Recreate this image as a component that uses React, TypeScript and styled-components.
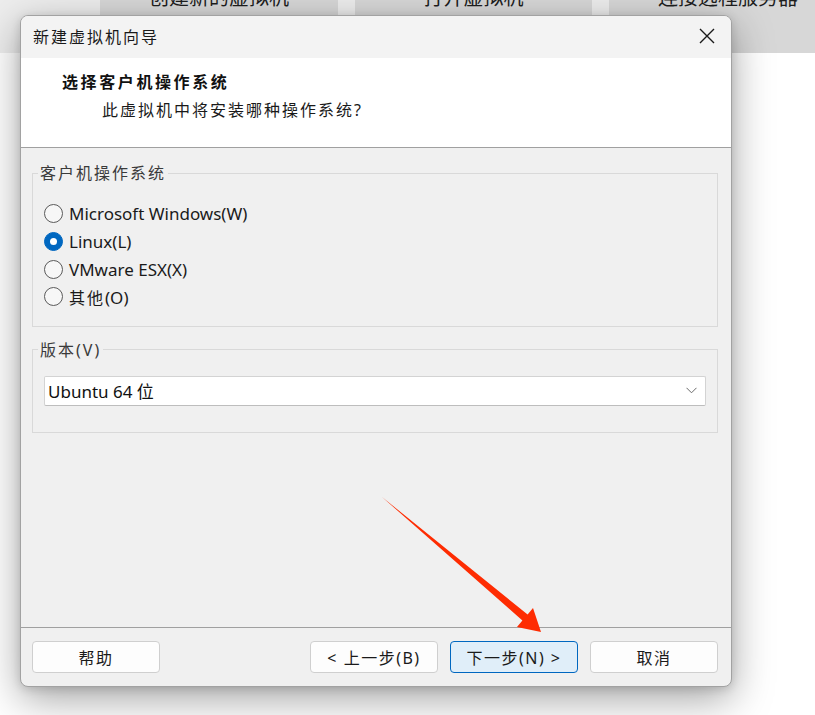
import React from 'react';
import styled, { createGlobalStyle } from 'styled-components';

const FONT = `"Noto Sans", "Noto Sans CJK SC", sans-serif`;

const GlobalStyle = createGlobalStyle`
  html, body {
    margin: 0;
    padding: 0;
    background: #ffffff;
  }
  body {
    font-family: ${FONT};
    color: #1a1a1a;
  }
`;

const Desktop = styled.div`
  position: relative;
  width: 815px;
  height: 715px;
  overflow: hidden;
  background: #ffffff;
`;

const Toolbar = styled.div`
  display: flex;
  gap: 17px;
  height: 83px;
  margin-top: -30px;
  padding-left: 100px;
  background: #ededed;
`;

const ToolButton = styled.div<{ $w: number }>`
  flex: 0 0 ${p => p.$w}px;
  background: #d7d7d7;
  color: #1e1e1e;
  font-size: 20px;
  line-height: 24px;
  text-align: center;
  padding-top: 16px;
  box-sizing: border-box;
`;

const Window = styled.div`
  position: absolute;
  left: 20px;
  top: 15px;
  width: 712px;
  height: 672px;
  box-sizing: border-box;
  display: flex;
  flex-direction: column;
  border: 1px solid #a2a2a2;
  border-radius: 8px;
  overflow: hidden;
  background: #f0f0f0;
  box-shadow: 0 12px 40px rgba(0, 0, 0, 0.36), 0 2px 10px rgba(0, 0, 0, 0.14);
`;

const TitleBar = styled.div`
  flex: 0 0 42px;
  display: flex;
  align-items: center;
  justify-content: space-between;
  padding: 0 16px 3px 12px;
  box-sizing: border-box;
  background: #f3f3f3;
  font-size: 16px;
  letter-spacing: 2px;
  color: #1a1a1a;
`;

const CloseIcon = () => (
  <svg width="16" height="16" viewBox="0 0 16 16">
    <path d="M1 1 L15 15 M15 1 L1 15" stroke="#1a1a1a" strokeWidth="1.4" fill="none" />
  </svg>
);

const Header = styled.div`
  flex: 0 0 90px;
  background: #ffffff;
  border-bottom: 1px solid #a0a0a0;
  padding: 12px 0 0 41px;
  box-sizing: border-box;
`;

const HeaderTitle = styled.div`
  font-size: 16px;
  font-weight: 700;
  letter-spacing: 2.6px;
  line-height: 24px;
  color: #111;
`;

const HeaderSub = styled.div`
  margin: 4px 0 0 40px;
  font-size: 16px;
  letter-spacing: 2px;
  line-height: 24px;
  color: #1a1a1a;
`;

const Body = styled.div`
  flex: 1;
  display: flex;
  flex-direction: column;
  gap: 12px;
  padding: 14px 13px 0 11px;
`;

const Group = styled.fieldset<{ $pt: number; $pb: number }>`
  margin: 0;
  border: 1px solid #d9d9d9;
  padding: ${p => p.$pt}px 11px ${p => p.$pb}px 11px;
`;

const Legend = styled.legend`
  margin-left: -6px;
  padding: 0 2px;
  font-size: 16px;
  line-height: 22px;
  letter-spacing: 2px;
  color: #3a3a3a;
`;

const RadioList = styled.div`
  display: flex;
  flex-direction: column;
`;

const RadioRow = styled.label`
  display: flex;
  align-items: center;
  gap: 6px;
  height: 27.7px;
  font-size: 17px;
  color: #1a1a1a;
`;

const RadioDot = styled.span<{ $on: boolean }>`
  flex: 0 0 auto;
  width: 19px;
  height: 19px;
  box-sizing: border-box;
  border-radius: 50%;
  border: 1px solid ${p => (p.$on ? '#0067c0' : '#5a5a5a')};
  background: ${p => (p.$on ? '#0067c0' : '#f7f7f7')};
  display: flex;
  align-items: center;
  justify-content: center;
  &::after {
    content: '';
    display: ${p => (p.$on ? 'block' : 'none')};
    width: 7px;
    height: 7px;
    border-radius: 50%;
    background: #ffffff;
  }
`;

const Cjk = styled.span`
  font-size: 16px;
  letter-spacing: 2px;
`;

const Select = styled.div`
  height: 30px;
  box-sizing: border-box;
  display: flex;
  align-items: center;
  justify-content: space-between;
  padding: 0 8px 0 3px;
  background: #ffffff;
  border: 1px solid #d3d3d3;
  border-bottom-color: #bdbdbd;
  border-radius: 2px;
  font-size: 17px;
  color: #111;
`;

const Chevron = () => (
  <svg width="11" height="7" viewBox="0 0 11 7">
    <path d="M0.5 0.8 L5.5 5.8 L10.5 0.8" stroke="#6a6a6a" strokeWidth="1" fill="none" />
  </svg>
);

const Footer = styled.div`
  flex: 0 0 59px;
  display: flex;
  align-items: flex-start;
  gap: 12px;
  padding: 13px 13px 0 11px;
  box-sizing: border-box;
  border-top: 1px solid #a0a0a0;
`;

const Spacer = styled.div`
  flex: 1;
`;

const Button = styled.div<{ $primary?: boolean }>`
  width: 128px;
  height: 32px;
  box-sizing: border-box;
  display: flex;
  align-items: center;
  justify-content: center;
  border-radius: 4px;
  border: 1px solid ${p => (p.$primary ? '#0067c0' : '#cfcfcf')};
  background: ${p => (p.$primary ? '#e0eef9' : '#fdfdfd')};
  font-size: 16px;
  letter-spacing: 1.5px;
  color: #1a1a1a;
`;

const Overlay = styled.svg`
  position: absolute;
  left: 0;
  top: 0;
  pointer-events: none;
`;

const options = [
  { label: 'Microsoft Windows(W)', on: false },
  { label: 'Linux(L)', on: true },
  { label: 'VMware ESX(X)', on: false },
];

export default function App() {
  return (
    <>
      <GlobalStyle />
      <Desktop>
        <Toolbar>
          <ToolButton $w={238}>创建新的虚拟机</ToolButton>
          <ToolButton $w={237}>打开虚拟机</ToolButton>
          <ToolButton $w={238}>连接远程服务器</ToolButton>
        </Toolbar>

        <Window>
          <TitleBar>
            <span>新建虚拟机向导</span>
            <CloseIcon />
          </TitleBar>
          <Header>
            <HeaderTitle>选择客户机操作系统</HeaderTitle>
            <HeaderSub>此虚拟机中将安装哪种操作系统?</HeaderSub>
          </Header>
          <Body>
            <Group $pt={16} $pb={15}>
              <Legend>客户机操作系统</Legend>
              <RadioList>
                {options.map(o => (
                  <RadioRow key={o.label}>
                    <RadioDot $on={o.on} />
                    {o.label}
                  </RadioRow>
                ))}
                <RadioRow>
                  <RadioDot $on={false} />
                  <span><Cjk>其他</Cjk>(O)</span>
                </RadioRow>
              </RadioList>
            </Group>
            <Group $pt={15} $pb={26}>
              <Legend>版本(V)</Legend>
              <Select>
                <span>Ubuntu 64 位</span>
                <Chevron />
              </Select>
            </Group>
          </Body>
          <Footer>
            <Button>帮助</Button>
            <Spacer />
            <Button>&lt; 上一步(B)</Button>
            <Button $primary>下一步(N) &gt;</Button>
            <Button>取消</Button>
          </Footer>
        </Window>

        <Overlay width="815" height="715" viewBox="0 0 815 715">
          <polygon
            points="382,497 522.4,620.5 517,627 541,632 533,608 527.6,614.5"
            fill="#fe2c02"
          />
        </Overlay>
      </Desktop>
    </>
  );
}
